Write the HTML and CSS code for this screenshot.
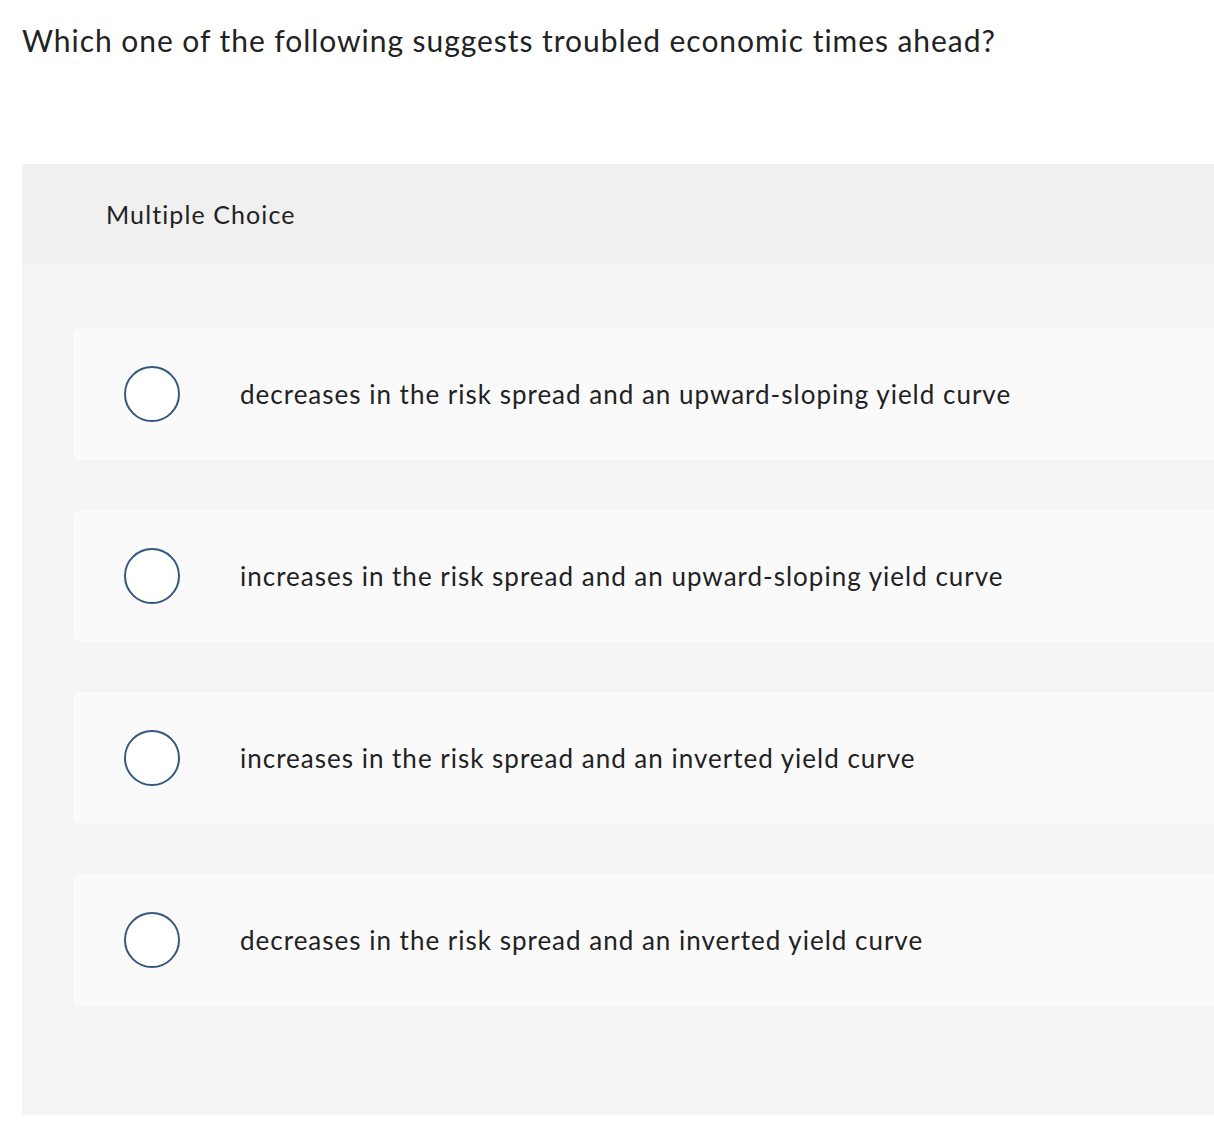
FILE: index.html
```html
<!DOCTYPE html>
<html>
<head>
<meta charset="utf-8">
<link rel="stylesheet" href="styles.css">
</head>
<body>
<h1 class="question">Which one of the following suggests troubled economic times ahead?</h1>
<section class="mc">
  <header class="mc-head">Multiple Choice</header>
  <div class="mc-body">
    <label class="opt"><span class="radio"></span><span class="opt-text">decreases in the risk spread and an upward-sloping yield curve</span></label>
    <label class="opt"><span class="radio"></span><span class="opt-text">increases in the risk spread and an upward-sloping yield curve</span></label>
    <label class="opt"><span class="radio"></span><span class="opt-text">increases in the risk spread and an inverted yield curve</span></label>
    <label class="opt"><span class="radio"></span><span class="opt-text">decreases in the risk spread and an inverted yield curve</span></label>
  </div>
</section>
</body>
</html>
```

FILE: styles.css
```css
html, body {
  margin: 0;
  padding: 0;
  background: #ffffff;
  overflow: hidden;
}
body {
  font-family: Lato, "Open Sans", Arial, sans-serif;
  color: #222222;
  width: 1214px;
}
.question {
  margin: 0;
  padding: 20px 0 0 22px;
  height: 164px;
  box-sizing: border-box;
  font-size: 30px;
  font-weight: 400;
  line-height: 40px;
  letter-spacing: 0.95px;
  color: #222222;
}
.mc {
  margin-left: 22px;
  width: 1220px;
  background: #f5f5f5;
  border-radius: 3px 0 0 3px;
}
.mc-head {
  height: 100px;
  background: #f0f0f0;
  box-sizing: border-box;
  padding-left: 84px;
  display: flex;
  align-items: center;
  font-size: 25px;
  letter-spacing: 1.1px;
  border-radius: 3px 0 0 0;
}
.mc-body {
  padding: 64px 0 109px 51px;
  display: flex;
  flex-direction: column;
  gap: 50px;
}
.opt {
  height: 132px;
  background: #fafafa;
  border-radius: 6px 0 0 6px;
  box-shadow: 0 0 0 1px #f3f3f3;
  display: flex;
  align-items: center;
  padding-left: 51px;
}
.radio {
  width: 52px;
  height: 52px;
  border: 2px solid #36577f;
  border-radius: 50%;
  background: #ffffff;
  flex: none;
}
.opt-text {
  margin-left: 60px;
  font-size: 26px;
  letter-spacing: 1px;
  color: #222222;
}
```
